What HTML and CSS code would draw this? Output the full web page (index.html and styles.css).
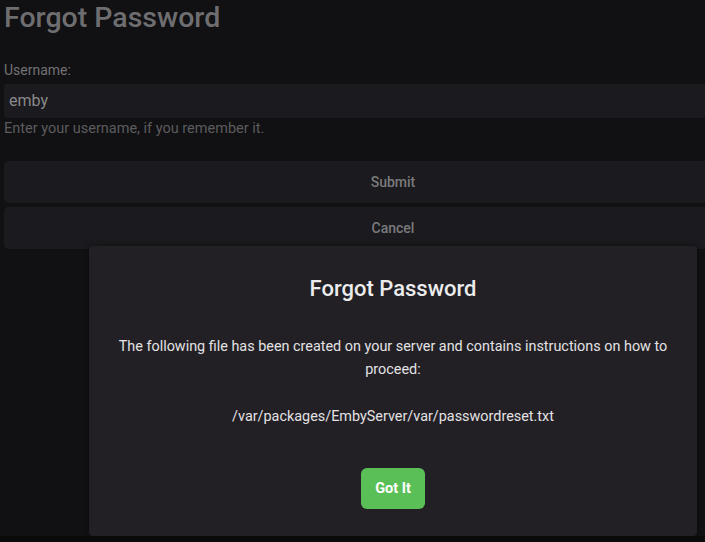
FILE: index.html
```html
<!DOCTYPE html>
<html lang="en">
<head>
<meta charset="utf-8">
<title>Forgot Password</title>
<link rel="stylesheet" href="styles.css">
</head>
<body>
<div class="screen">
  <div class="page">
    <h1 class="page-title">Forgot Password</h1>
    <form class="form">
      <label class="field-label" for="user">Username:</label>
      <div class="input">emby</div>
      <div class="field-help">Enter your username, if you remember it.</div>
      <div class="actions">
        <button type="button" class="btn">Submit</button>
        <button type="button" class="btn">Cancel</button>
      </div>
    </form>
  </div>
  <div class="dialog">
    <h2 class="dialog-title">Forgot Password</h2>
    <p class="dialog-text">The following file has been created on your server and contains instructions on how to proceed:</p>
    <p class="dialog-path">/var/packages/EmbyServer/var/passwordreset.txt</p>
    <div class="dialog-actions">
      <button type="button" class="btn-green">Got It</button>
    </div>
  </div>
</div>
</body>
</html>
```

FILE: styles.css
```css
html {
  background: #0a0a0b;
}
body {
  margin: 0;
  overflow: hidden;
  font-family: Roboto, "Liberation Sans", sans-serif;
}
.screen {
  position: relative;
  width: 786px;
  height: 536px;
  background: #111013;
}
.page {
  padding: 0 4px;
}
.page-title {
  margin: 0;
  font-size: 28.5px;
  font-weight: 500;
  color: #6e6e70;
  line-height: 35px;
}
.form {
  display: flex;
  flex-direction: column;
  margin-top: 25px;
}
.field-label {
  font-size: 14px;
  color: #727274;
  line-height: 20px;
}
.input {
  margin-top: 4px;
  height: 34px;
  line-height: 34px;
  padding: 0 5px;
  background: #1b1a1e;
  border-radius: 3px;
  font-size: 16px;
  color: #8a8a8c;
}
.field-help {
  font-size: 14.5px;
  color: #5c5c5e;
  line-height: 20px;
  margin-top: 1px;
}
.actions {
  display: flex;
  flex-direction: column;
  gap: 4px;
  margin-top: 22px;
}
.btn {
  height: 42px;
  border: 0;
  border-radius: 5px;
  background: #1b1a1e;
  color: #7a7a7c;
  font-family: Roboto, "Liberation Sans", sans-serif;
  font-size: 14px;
  font-weight: 500;
}
.dialog {
  position: absolute;
  left: 89px;
  top: 246px;
  width: 608px;
  height: 290px;
  box-sizing: border-box;
  background: #222024;
  border-radius: 4px;
  box-shadow: 0 0 6px rgba(0, 0, 0, 0.5);
  text-align: center;
  padding: 0 24px;
  color: #e2e2e4;
}
.dialog-title {
  margin: 29px 0 0;
  font-size: 22px;
  font-weight: 500;
  line-height: 28px;
  color: #ececee;
}
.dialog-text {
  margin: 32px 0 0;
  font-size: 14.4px;
  line-height: 23px;
}
.dialog-path {
  margin: 24px 0 0;
  font-size: 14.4px;
  line-height: 23px;
}
.dialog-actions {
  display: flex;
  justify-content: center;
  margin-top: 40px;
}
.btn-green {
  width: 64px;
  height: 41px;
  border: 0;
  border-radius: 6px;
  background: #5bbf58;
  color: #ffffff;
  font-family: Roboto, "Liberation Sans", sans-serif;
  font-size: 14.5px;
  font-weight: 700;
}
```
